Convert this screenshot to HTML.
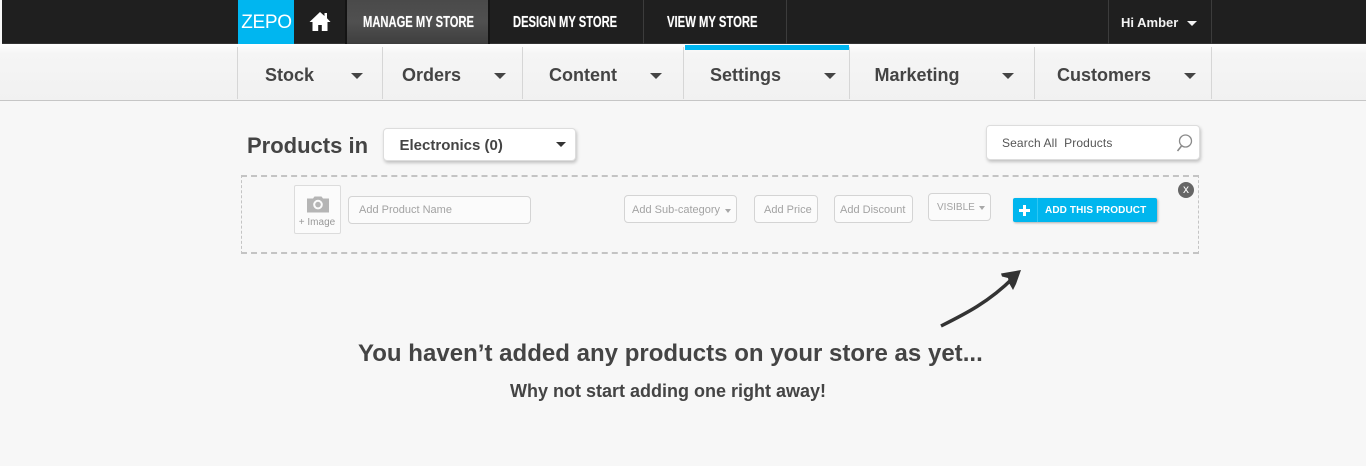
<!DOCTYPE html>
<html><head><meta charset="utf-8"><style>
*{box-sizing:border-box}
html,body{margin:0;padding:0}
body{width:1366px;height:466px;overflow:hidden;position:relative;background:#f7f7f7;font-family:"Liberation Sans",sans-serif;color:#444}
.a{position:absolute;white-space:nowrap}
.top{left:2px;right:0;top:0;height:44px;background:#1f1f1f;border-bottom:1px solid #333}
.sub{left:0;top:44px;width:1366px;height:57px;background:linear-gradient(#fff 0,#fcfcfc 3px,#f5f5f5 10px,#f1f1f1 100%);border-bottom:1px solid #c6c6c6}
.vd{width:1px;background:#3c3c3c;top:0;height:44px}
.sd{width:1px;background:#d6d6d6;top:47px;height:52px}
.t{color:#fff;font-weight:bold;font-size:16px;top:14px;line-height:17px;transform-origin:0 50%;transform:scaleX(.70);text-shadow:0 0 1px rgba(255,255,255,.5)}
.n{font-weight:bold;font-size:18px;top:64px;line-height:22px;color:#444}
.c{width:0;height:0;border-left:6px solid transparent;border-right:6px solid transparent;border-top:6px solid #444;top:73px}
.box{background:#fbfbfb;border:1px solid #d4d4d4;border-radius:4px;color:#a3a3a3;font-size:11px;line-height:28px;height:28px}
</style></head><body>
<div class="a top"></div>
<div class="a sub"></div>

<div class="a" style="left:238px;top:0;width:56px;height:44px;background:#00b6f0;color:#fff;font-size:19px;line-height:45px;text-align:center;letter-spacing:-.3px;padding-left:1px">ZEPO</div>
<svg class="a" style="left:309px;top:11px" width="22" height="21" viewBox="0 0 22 21"><path d="M11 1 L15.500 5 V2 H18 V7.300 L21.500 11 H18.500 V20 H12.800 V14 H9.200 V20 H3.500 V11 H0.500 Z" fill="#fff"/></svg>

<div class="a" style="left:345px;top:0;width:145px;height:44px;background:linear-gradient(#4a4a4a,#505050 50%,#3e3e3e);border-left:2px solid #141414;border-right:2px solid #141414"></div>
<div class="a t" style="left:363px">MANAGE MY STORE</div>
<div class="a t" style="left:513px">DESIGN MY STORE</div>
<div class="a t" style="left:667px;transform:scaleX(.706)">VIEW MY STORE</div>
<div class="a vd" style="left:643px"></div>
<div class="a vd" style="left:786px"></div>
<div class="a vd" style="left:1108px"></div>
<div class="a vd" style="left:1211px"></div>
<div class="a" style="left:1121px;top:15px;color:#f2f2f2;font-size:13px;line-height:16px;font-weight:bold">Hi Amber</div>
<div class="a" style="left:1187px;top:21px;width:0;height:0;border-left:5px solid transparent;border-right:5px solid transparent;border-top:5px solid #f2f2f2"></div>

<div class="a" style="left:685px;top:45px;width:164px;height:5px;background:#00b6f0"></div>
<div class="a sd" style="left:237px"></div>
<div class="a sd" style="left:382px"></div>
<div class="a sd" style="left:522px"></div>
<div class="a sd" style="left:683px"></div>
<div class="a sd" style="left:849px"></div>
<div class="a sd" style="left:1034px"></div>
<div class="a sd" style="left:1211px"></div>

<div class="a n" style="left:265px">Stock</div><div class="a c" style="left:351px"></div>
<div class="a n" style="left:402px">Orders</div><div class="a c" style="left:494px"></div>
<div class="a n" style="left:549px">Content</div><div class="a c" style="left:650px"></div>
<div class="a n" style="left:710px">Settings</div><div class="a c" style="left:824px"></div>
<div class="a n" style="left:874.500px">Marketing</div><div class="a c" style="left:1002px"></div>
<div class="a n" style="left:1057px">Customers</div><div class="a c" style="left:1184px"></div>

<div class="a" style="left:247px;top:132px;font-size:22px;line-height:27px;font-weight:bold;color:#444">Products in</div>
<div class="a" style="left:383px;top:128px;width:193px;height:33px;background:#fff;border:1px solid #ddd;border-radius:4px;box-shadow:1px 2px 3px rgba(0,0,0,.22);font-size:15px;font-weight:bold;line-height:33px;padding-left:15.500px;color:#444">Electronics (0)</div>
<div class="a" style="left:556px;top:142px;width:0;height:0;border-left:5px solid transparent;border-right:5px solid transparent;border-top:5px solid #333"></div>

<div class="a" style="left:986px;top:125px;width:214px;height:35px;background:#fff;border:1px solid #ddd;border-radius:4px;box-shadow:1px 2px 3px rgba(0,0,0,.22);font-size:12px;line-height:34px;padding-left:15px;color:#555;letter-spacing:.01em">Search All&nbsp; Products</div>
<svg class="a" style="left:1174px;top:132px" width="22" height="22" viewBox="0 0 22 22"><circle cx="11.500" cy="9" r="6" fill="none" stroke="#8a8a8a" stroke-width="1.300"/><path d="M7.500 14 L3.500 19" stroke="#8a8a8a" stroke-width="1.600" fill="none"/></svg>

<div class="a" style="left:241px;top:175px;width:958px;height:79px;border:1px dashed #c4c4c4;border-width:2px 1px 2px 1px"></div>
<div class="a" style="left:1178px;top:182px;width:16px;height:16px;border-radius:50%;background:#666;color:#fff;font-size:12px;line-height:15px;text-align:center">x</div>

<div class="a" style="left:294px;top:185px;width:47px;height:49px;background:#fbfbfb;border:1px solid #dcdcdc;border-radius:2px"></div>
<svg class="a" style="left:306px;top:196px" width="24" height="17" viewBox="0 0 24 17"><path fill-rule="evenodd" d="M1 2.500 H7 L8.500 0.500 H15.500 L17 2.500 H23 V16.500 H1 Z M12 3.800 A4.800 4.800 0 1 0 12 13.400 A4.800 4.800 0 1 0 12 3.800 Z M12 5.800 A2.800 2.800 0 1 1 12 11.400 A2.800 2.800 0 1 1 12 5.800 Z" fill="#b5b5b5"/></svg>
<div class="a" style="left:294px;width:46px;text-align:center;top:217px;font-size:10px;line-height:12px;color:#999">+ Image</div>

<div class="a box" style="left:348px;top:196px;width:183px;padding-left:10px;line-height:26px">Add Product Name</div>
<div class="a box" style="left:624px;top:195px;width:113px;padding-left:7px">Add Sub-category</div>
<div class="a" style="left:725px;top:209px;width:0;height:0;border-left:3.500px solid transparent;border-right:3.500px solid transparent;border-top:4px solid #a8a8a8"></div>
<div class="a box" style="left:754px;top:195px;width:64px;padding-left:9px">Add Price</div>
<div class="a box" style="left:834px;top:195px;width:79px;padding-left:5px">Add Discount</div>
<div class="a box" style="left:928px;top:193px;width:63px;height:28px;padding-left:8px;font-size:10px;line-height:27px">VISIBLE</div>
<div class="a" style="left:979px;top:206px;width:0;height:0;border-left:3.500px solid transparent;border-right:3.500px solid transparent;border-top:4px solid #a8a8a8"></div>

<div class="a" style="left:1013px;top:198px;width:144px;height:24px;background:#00b6ee;border-radius:2px;box-shadow:1px 1px 2px rgba(0,0,0,.3)"></div>
<div class="a" style="left:1037px;top:198px;width:1px;height:24px;background:#2ec6f3"></div>
<div class="a" style="left:1019px;top:209px;width:11px;height:3px;background:#fff"></div>
<div class="a" style="left:1023px;top:205px;width:3px;height:11px;background:#fff"></div>
<div class="a" style="left:1045px;top:204px;font-size:10px;font-weight:bold;line-height:14px;color:#fff;letter-spacing:.12px">ADD THIS PRODUCT</div>

<svg class="a" style="left:935px;top:265px" width="95" height="70" viewBox="0 0 95 70"><path d="M6 61 C30 49 54 37 78 13" stroke="#333" stroke-width="3.400" fill="none"/><path d="M86 5 L66 8.500 L67 11.500 L73 13 L74 18 L78 25 L81 19 Z" fill="#333"/></svg>

<div class="a" style="left:358px;top:339px;font-size:24px;line-height:29px;font-weight:bold;color:#444;letter-spacing:.02px">You haven’t added any products on your store as yet...</div>
<div class="a" style="left:510px;top:380px;font-size:18px;line-height:22px;font-weight:bold;color:#444">Why not start adding one right away!</div>
</body></html>
